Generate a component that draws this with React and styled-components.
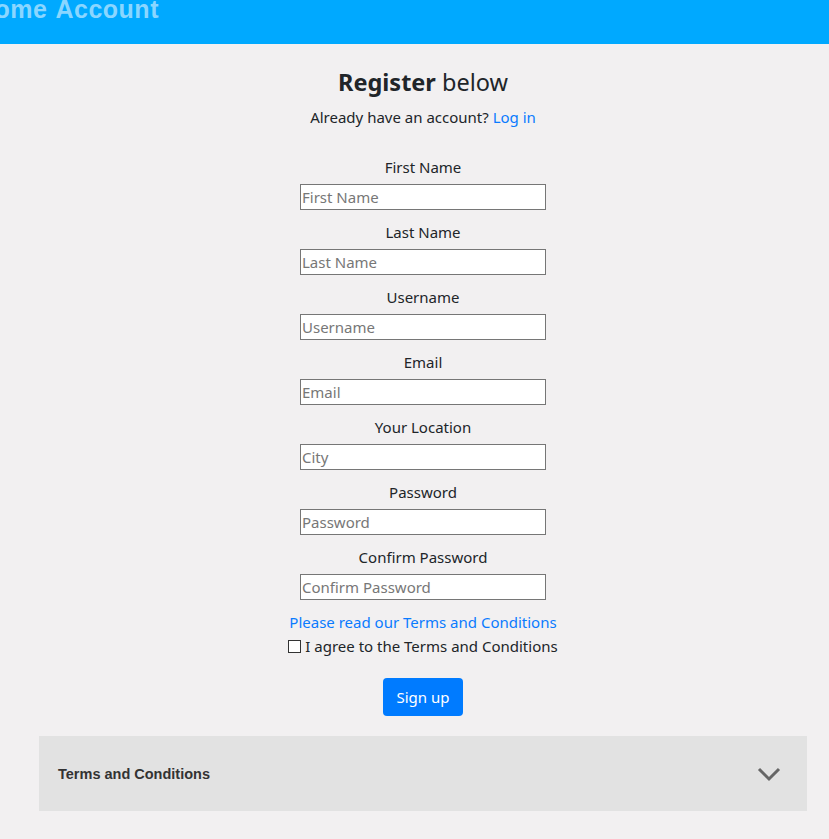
import React from 'react';
import styled, { createGlobalStyle } from 'styled-components';

const GlobalStyle = createGlobalStyle`
  html, body {
    margin: 0;
    padding: 0;
    background: #f2f0f1;
    font-family: 'Noto Sans', Lato, sans-serif;
    color: #212529;
    overflow: hidden;
  }
`;

const Header = styled.header`
  height: 44px;
  background: #00a9ff;
  overflow: hidden;
`;

const Nav = styled.nav`
  display: flex;
  gap: 8px;
  margin: -9px 0 0 -24px;
`;

const NavItem = styled.a`
  font-family: 'Liberation Sans', Arial, sans-serif;
  font-weight: bold;
  font-size: 25px;
  line-height: 36px;
  color: #8ad6ff;
  letter-spacing: 0.5px;
`;

const Main = styled.main`
  display: flex;
  flex-direction: column;
  align-items: center;
  padding: 23px 22px 28px 39px;
`;

const Title = styled.h1`
  margin: 0;
  font-size: 23.5px;
  line-height: 30px;
  font-weight: normal;

  strong {
    font-weight: bold;
  }
`;

const Sub = styled.p`
  margin: 9px 0 28px;
  font-size: 15px;
  line-height: 22px;
`;

const Link = styled.a`
  color: #0a7bff;
  text-decoration: none;
`;

const Field = styled.div`
  display: flex;
  flex-direction: column;
  align-items: center;
  gap: 6px;
  margin-bottom: 11px;
`;

const Label = styled.label`
  font-size: 15px;
  line-height: 22px;
`;

const Input = styled.input`
  box-sizing: border-box;
  width: 246px;
  height: 26px;
  padding: 0 1px;
  border: 1px solid #767676;
  background: #fff;
  font-family: inherit;
  font-size: 15px;

  &::placeholder {
    color: #777;
  }
`;

const TermsLink = styled(Link)`
  font-size: 15px;
  line-height: 22px;
`;

const Agree = styled.label`
  display: flex;
  align-items: center;
  gap: 4px;
  font-size: 15px;
  line-height: 22px;
  margin-top: 2px;
`;

const Box = styled.input`
  width: 13px;
  height: 13px;
  margin: 0;
  appearance: none;
  border: 1px solid #333;
  background: #fff;
  box-sizing: border-box;
`;

const Button = styled.button`
  margin-top: 21px;
  width: 80px;
  height: 38px;
  border: none;
  border-radius: 4px;
  background: #007bff;
  color: #fff;
  font-family: inherit;
  font-size: 15px;
`;

const Accordion = styled.section`
  align-self: stretch;
  margin-top: 20px;
  height: 75px;
  background: #e2e2e2;
  display: flex;
  align-items: center;
  justify-content: space-between;
  padding: 0 26px 0 19px;
`;

const AccTitle = styled.span`
  font-family: 'Liberation Sans', Arial, sans-serif;
  font-weight: bold;
  font-size: 14.5px;
  color: #333;
`;

const fields = [
  ['First Name', 'First Name'],
  ['Last Name', 'Last Name'],
  ['Username', 'Username'],
  ['Email', 'Email'],
  ['Your Location', 'City'],
  ['Password', 'Password'],
  ['Confirm Password', 'Confirm Password'],
];

export default function App() {
  return (
    <>
      <GlobalStyle />
      <Header>
        <Nav>
          <NavItem>Home</NavItem>
          <NavItem>Account</NavItem>
        </Nav>
      </Header>
      <Main>
        <Title>
          <strong>Register</strong> below
        </Title>
        <Sub>
          Already have an account? <Link href="#">Log in</Link>
        </Sub>
        {fields.map(([label, ph]) => (
          <Field key={label}>
            <Label>{label}</Label>
            <Input placeholder={ph} type={label.includes('Password') ? 'password' : 'text'} />
          </Field>
        ))}
        <TermsLink href="#">Please read our Terms and Conditions</TermsLink>
        <Agree>
          <Box type="checkbox" />
          I agree to the Terms and Conditions
        </Agree>
        <Button>Sign up</Button>
        <Accordion>
          <AccTitle>Terms and Conditions</AccTitle>
          <svg width="24" height="16" viewBox="0 0 24 16">
            <path d="M2 3 L12 13 L22 3" fill="none" stroke="#666" strokeWidth="3" />
          </svg>
        </Accordion>
      </Main>
    </>
  );
}
